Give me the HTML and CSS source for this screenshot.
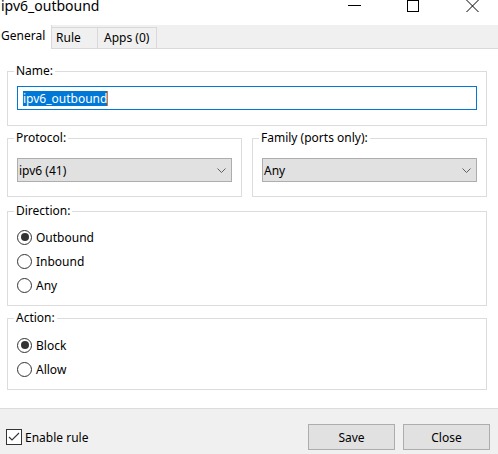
FILE: index.html
```html
<!DOCTYPE html>
<html lang="en">
<head>
<meta charset="utf-8">
<title>ipv6_outbound</title>
<link rel="stylesheet" href="styles.css">
</head>
<body>
<div class="window">
  <div class="titlebar">
    <div class="title">ipv6_outbound</div>
    <div class="controls">
      <svg class="ctl" width="13" height="12" viewBox="0 0 13 12"><line x1="0" y1="5.5" x2="13" y2="5.5" stroke="#000" stroke-width="1"/></svg>
      <svg class="ctl" width="13" height="12" viewBox="0 0 13 12"><rect x="0.5" y="0.5" width="11" height="11" fill="none" stroke="#000" stroke-width="1"/></svg>
      <svg class="ctl" width="13" height="12" viewBox="0 0 13 12"><path d="M0.5 0 L12.5 12 M12.5 0 L0.5 12" fill="none" stroke="#000" stroke-width="1"/></svg>
    </div>
  </div>

  <div class="tabs">
    <div class="tab tab-active">General</div>
    <div class="tab tab-rule">Rule</div>
    <div class="tab tab-apps">Apps (0)</div>
  </div>

  <div class="content">
    <fieldset class="group group-name">
      <legend>Name:</legend>
      <div class="textbox"><span class="sel">ipv6_outbound</span><span class="caret"></span></div>
    </fieldset>

    <div class="row">
      <fieldset class="group group-half">
        <legend>Protocol:</legend>
        <div class="combo">
          <span class="combo-text">ipv6 (41)</span>
          <svg class="chev" width="9" height="5" viewBox="0 0 9 5"><polyline points="0.5,0.5 4.5,4.5 8.5,0.5" fill="none" stroke="#5f5f5f" stroke-width="1"/></svg>
        </div>
      </fieldset>
      <fieldset class="group group-half">
        <legend>Family (ports only):</legend>
        <div class="combo">
          <span class="combo-text">Any</span>
          <svg class="chev" width="9" height="5" viewBox="0 0 9 5"><polyline points="0.5,0.5 4.5,4.5 8.5,0.5" fill="none" stroke="#5f5f5f" stroke-width="1"/></svg>
        </div>
      </fieldset>
    </div>

    <fieldset class="group group-dir">
      <legend>Direction:</legend>
      <div class="radio"><span class="circle checked"><span class="dot"></span></span><span>Outbound</span></div>
      <div class="radio"><span class="circle"></span><span>Inbound</span></div>
      <div class="radio"><span class="circle"></span><span>Any</span></div>
    </fieldset>

    <fieldset class="group group-act">
      <legend>Action:</legend>
      <div class="radio"><span class="circle checked"><span class="dot"></span></span><span>Block</span></div>
      <div class="radio"><span class="circle"></span><span>Allow</span></div>
    </fieldset>
  </div>

  <div class="footer">
    <div class="check">
      <svg class="checkbox" width="16" height="16" viewBox="0 0 16 16"><rect x="0.5" y="0.5" width="15" height="15" fill="#fff" stroke="#333" stroke-width="1"/><polyline points="3,8 6,11 13,4" fill="none" stroke="#333" stroke-width="1.1"/></svg>
      <span>Enable rule</span>
    </div>
    <div class="buttons">
      <div class="btn">Save</div>
      <div class="btn">Close</div>
    </div>
  </div>
</div>
</body>
</html>
```

FILE: styles.css
```css
html, body {
  margin: 0;
  padding: 0;
}

body {
  width: 498px;
  height: 454px;
  overflow: hidden;
  background: #fff;
  color: #000;
  font-family: "Noto Sans", "Open Sans", sans-serif;
  font-size: 12px;
}

.window {
  width: 498px;
  height: 454px;
  display: flex;
  flex-direction: column;
}

/* Title bar */
.titlebar {
  height: 25px;
  flex: none;
  display: flex;
  align-items: flex-start;
  background: #fff;
}

.title {
  font-size: 14px;
  line-height: 12px;
  padding-left: 1px;
}

.controls {
  margin-left: auto;
  display: flex;
  align-items: flex-start;
  gap: 46px;
  padding-right: 19px;
}

.ctl {
  display: block;
}

/* Tabs */
.tabs {
  height: 23px;
  flex: none;
  display: flex;
  align-items: flex-end;
  background: #f0f0f0;
  border-bottom: 1px solid #d9d9d9;
}

.tab {
  box-sizing: border-box;
  height: 21px;
  line-height: 16px;
  padding-top: 2px;
  border-top: 1px solid #d9d9d9;
  border-right: 1px solid #d9d9d9;
  white-space: nowrap;
}

.tab-active {
  width: 52px;
  height: 24px;
  margin-bottom: -1px;
  padding-top: 3px;
  padding-left: 1px;
  background: #fff;
  border-top: none;
}

.tab-rule {
  width: 46px;
  padding-left: 4px;
}

.tab-apps {
  width: 59px;
  padding-left: 6px;
}

/* Content */
.content {
  flex: none;
  height: 359px;
  padding-left: 7px;
  background: #fff;
}

.group {
  box-sizing: border-box;
  width: 480px;
  margin: 0;
  min-width: 0;
  border: 1px solid #dcdcdc;
  padding: 0 9px;
}

.group legend {
  padding: 0 2px;
  margin-left: -3px;
  line-height: 16px;
  font-size: 12px;
}

.group-name {
  margin-top: 14px;
  padding-top: 7px;
  padding-bottom: 15px;
}

.textbox {
  box-sizing: border-box;
  height: 24px;
  border: 1px solid #0078d7;
  padding-left: 5px;
  display: flex;
  align-items: center;
}

.sel {
  background: #0078d7;
  color: #fff;
  line-height: 15px;
}

.caret {
  width: 1px;
  height: 15px;
  background: #e0781e;
}

.row {
  display: flex;
  gap: 10px;
  margin-top: 4px;
}

.group-half {
  width: 235px;
  padding-top: 12px;
  padding-bottom: 14px;
}

.combo {
  box-sizing: border-box;
  height: 24px;
  background: #e1e1e1;
  border: 1px solid #adadad;
  padding-left: 1px;
  padding-right: 5px;
  display: flex;
  align-items: center;
}

.combo-text {
  flex: 1;
}

.chev {
  display: block;
  margin-top: 1px;
}

.group-dir {
  margin-top: 6px;
  padding-top: 6px;
  padding-bottom: 8px;
}

.group-act {
  margin-top: 4px;
  padding-top: 7px;
  padding-bottom: 8px;
}

.radio {
  height: 24px;
  display: flex;
  align-items: center;
  gap: 4px;
}

.circle {
  box-sizing: border-box;
  width: 15px;
  height: 15px;
  border: 1px solid #333;
  border-radius: 50%;
  background: #fff;
  display: flex;
  align-items: center;
  justify-content: center;
}

.dot {
  width: 8px;
  height: 8px;
  border-radius: 50%;
  background: #333;
}

/* Footer */
.footer {
  flex: 1;
  display: flex;
  align-items: flex-start;
  background: #f0f0f0;
  border-top: 1px solid #dcdcdc;
  padding: 15px 8px 0 6px;
}

.check {
  height: 26px;
  display: flex;
  align-items: center;
  gap: 3px;
}

.checkbox {
  display: block;
}

.buttons {
  margin-left: auto;
  display: flex;
  gap: 8px;
}

.btn {
  box-sizing: border-box;
  width: 87px;
  height: 26px;
  background: #e1e1e1;
  border: 1px solid #adadad;
  display: flex;
  align-items: center;
  justify-content: center;
}
```
